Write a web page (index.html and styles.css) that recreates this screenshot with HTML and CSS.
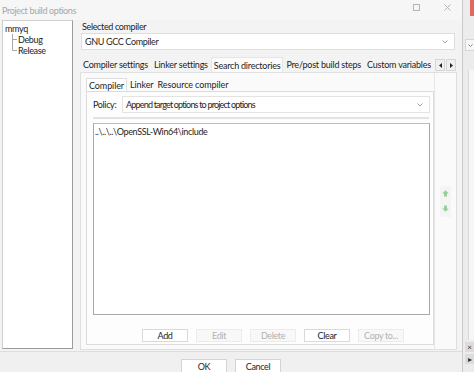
FILE: index.html
```html
<!DOCTYPE html>
<html lang="en">
<head>
<meta charset="UTF-8">
<title>Project build options</title>
<link rel="stylesheet" href="styles.css">
</head>
<body>
<div class="screen">
    <div class="dialog">
        <div class="titlebar">
            <span class="title">Project build options</span>
            <span class="win-btns">
                <svg width="7" height="7" viewBox="0 0 7 7"><rect x="0.5" y="0.5" width="6" height="6" fill="none" stroke="#b5b5b5"/></svg>
                <svg width="7" height="7" viewBox="0 0 7 7"><path d="M0.5 0.5L6.5 6.5M6.5 0.5L0.5 6.5" stroke="#b5b5b5"/></svg>
            </span>
        </div>
        <div class="body">
            <div class="tree">
                <div class="node">mmyq</div>
                <div class="kids">
                    <svg class="lines" width="6" height="22" viewBox="0 0 6 22"><path d="M1.5 0V16.5H6M1.5 5.5H6" fill="none" stroke="#a8a8a8"/></svg>
                    <div>
                        <div class="node">Debug</div>
                        <div class="node">Release</div>
                    </div>
                </div>
            </div>
            <div class="main">
                <div class="label">Selected compiler</div>
                <div class="select wide">
                    <span>GNU GCC Compiler</span>
                    <svg width="6" height="4" viewBox="0 0 6 4"><path d="M0.5 0.5L3 3L5.5 0.5" fill="none" stroke="#a0a0a0"/></svg>
                </div>
                <div class="tabs">
                    <span class="tab">Compiler settings</span>
                    <span class="tab">Linker settings</span>
                    <span class="tab active">Search directories</span>
                    <span class="tab">Pre/post build steps</span>
                    <span class="tab">Custom variables</span>
                    <span class="scroll">
                        <span class="arr"><svg width="3" height="5" viewBox="0 0 3 5"><path d="M3 0V5L0 2.5Z" fill="#222"/></svg></span>
                        <span class="arr"><svg width="3" height="5" viewBox="0 0 3 5"><path d="M0 0V5L3 2.5Z" fill="#222"/></svg></span>
                    </span>
                </div>
                <div class="panel">
                    <div class="subwrap">
                        <div class="subtabs">
                            <span class="subtab active">Compiler</span>
                            <span class="subtab">Linker</span>
                            <span class="subtab">Resource compiler</span>
                        </div>
                        <div class="subpanel">
                            <div class="policy">
                                <span class="policy-label">Policy:</span>
                                <div class="select narrow">
                                    <span class="tight">Append target options to project options</span>
                                    <svg width="6" height="4" viewBox="0 0 6 4"><path d="M0.5 0.5L3 3L5.5 0.5" fill="none" stroke="#a0a0a0"/></svg>
                                </div>
                            </div>
                            <div class="sep"></div>
                            <div class="list">..\..\..\OpenSSL-Win64\include</div>
                            <div class="buttons">
                                <span class="btn">Add</span>
                                <span class="btn off">Edit</span>
                                <span class="btn off">Delete</span>
                                <span class="btn">Clear</span>
                                <span class="btn off">Copy to...</span>
                            </div>
                        </div>
                    </div>
                    <div class="side">
                        <div class="movers">
                            <svg width="7" height="7" viewBox="0 0 7 7"><path d="M3.5 0.3L6.7 3.4H4.9V6.6H2.1V3.4H0.3Z" fill="#93cf93"/></svg>
                            <svg width="7" height="7" viewBox="0 0 7 7"><path d="M3.5 6.7L6.7 3.6H4.9V0.4H2.1V3.6H0.3Z" fill="#93cf93"/></svg>
                        </div>
                    </div>
                </div>
            </div>
        </div>
        <div class="footer">
            <span class="btn big">OK</span>
            <span class="btn big">Cancel</span>
        </div>
    </div>
    <div class="behind">
        <div class="red"></div>
        <div class="mini-drop"><svg width="5" height="3" viewBox="0 0 5 3"><path d="M0.5 0.5L2.5 2.5L4.5 0.5" fill="none" stroke="#888"/></svg></div>
        <div class="behind-panel"></div>
        <div class="mini-btn">×</div>
        <div class="mini-btn">▸</div>
    </div>
</div>
</body>
</html>
```
FILE: styles.css
```css
* {
    box-sizing: border-box;
}
body {
    margin: 0;
    width: 474px;
    height: 372px;
    overflow: hidden;
    font: 9px/1 "Lato", "Noto Sans", sans-serif;
    letter-spacing: -0.35px;
    white-space: nowrap;
    color: #1e1e1e;
    background: #e8e8e8;
}
.screen {
    display: flex;
    height: 372px;
}
.dialog {
    width: 463px;
    flex: none;
    display: flex;
    flex-direction: column;
    background: #f3f3f3;
    border-right: 1px solid #c9c9c9;
}
.titlebar {
    height: 20px;
    flex: none;
    display: flex;
    align-items: center;
    padding-left: 2px;
    color: #a6a6a6;
    background: #f6f6f6;
}
.title {
    flex: 1;
}
.win-btns {
    display: flex;
    gap: 24px;
    padding-right: 11px;
    margin-top: -6px;
}
.body {
    display: flex;
    height: 331px;
    flex: none;
    padding-left: 2px;
}
.tree {
    width: 71px;
    height: 329px;
    background: #fff;
    border: 1px solid #cfcfcf;
    border-right-color: #9c9c9c;
    border-bottom-color: #9c9c9c;
    padding: 2px 0 0 2px;
}
.node {
    line-height: 11px;
}
.kids {
    display: flex;
    padding-left: 6px;
}
.lines {
    margin-right: 1px;
}
.main {
    margin-left: 7px;
    width: 377px;
    display: flex;
    flex-direction: column;
}
.label {
    height: 13px;
    line-height: 13px;
    padding-left: 2px;
}
.select {
    height: 17px;
    display: flex;
    align-items: center;
    justify-content: space-between;
    background: #fff;
    border: 1px solid #dedede;
    padding: 0 6px 0 3px;
}
.select.wide {
    width: 374px;
    margin-left: 1px;
}
.tabs {
    margin-top: 7px;
    height: 15px;
    display: flex;
    align-items: stretch;
}
.tab {
    flex: none;
    padding: 0 3px;
    letter-spacing: -0.22px;
    display: flex;
    align-items: center;
}
.tab.active {
    padding: 0 2px;
    background: #fbfbfb;
    border: 1px solid #e6e6e6;
    border-bottom: none;
}
.scroll {
    margin-left: auto;
    display: flex;
    gap: 1px;
    padding-top: 2px;
    padding-right: 1px;
}
.arr {
    width: 10px;
    height: 12px;
    display: flex;
    align-items: center;
    justify-content: center;
    background: #f0f0f0;
    border: 1px solid #d6d6d6;
}
.panel {
    height: 278px;
    display: flex;
    background: #fafafa;
    border: 1px solid #dfdfdf;
}
.subwrap {
    width: 348px;
    margin-left: 5px;
    padding-top: 5px;
    display: flex;
    flex-direction: column;
}
.subtabs {
    height: 13px;
    display: flex;
}
.subtab {
    padding: 0 2px;
    letter-spacing: -0.1px;
    display: flex;
    align-items: center;
}
.subtab.active {
    margin-right: 1px;
    background: #fff;
    border: 1px solid #dedede;
    border-bottom: none;
}
.subpanel {
    height: 254px;
    background: #fdfdfd;
    border: 1px solid #dcdcdc;
    padding: 4px 3px 0 6px;
}
.policy {
    display: flex;
    align-items: center;
    height: 17px;
}
.policy-label {
    width: 29px;
}
.select.narrow {
    flex: 1;
    border-color: #e3e3e3;
}
.tight {
    letter-spacing: -0.8px;
}
.sep {
    margin-top: 4px;
    height: 2px;
    background: #e3e3e3;
    width: 336px;
}
.list {
    margin-top: 4px;
    width: 337px;
    height: 192px;
    background: #fff;
    border: 1px solid #a9a9a9;
    border-top-color: #bdbdbd;
    padding: 3px 1px;
}
.buttons {
    margin-top: 14px;
    display: flex;
    gap: 8px;
    padding-left: 49px;
}
.btn {
    width: 46px;
    height: 13px;
    display: flex;
    align-items: center;
    justify-content: center;
    background: #fff;
    border: 1px solid #d9d9d9;
}
.btn.off {
    color: #b2b2b2;
    background: #f8f8f8;
    border-color: #ececec;
}
.side {
    flex: 1;
    display: flex;
    justify-content: center;
    padding-top: 113px;
    border-left: 1px solid #e6e6e6;
}
.movers {
    width: 11px;
    height: 31px;
    display: flex;
    flex-direction: column;
    align-items: center;
    gap: 8px;
    padding-top: 4px;
    background: #f4f4f4;
}
.footer {
    flex: 1;
    display: flex;
    gap: 8px;
    padding: 7px 0 0 181px;
    border-top: 1px solid #dddddd;
    background: #f0f0f0;
}
.btn.big {
    height: 20px;
    align-items: flex-start;
    padding-top: 2px;
    width: 46px;
    border-color: #d4d4d4;
}
.behind {
    flex: 1;
    display: flex;
    flex-direction: column;
    align-items: flex-end;
    background: #ececec;
}
.red {
    width: 4px;
    height: 16px;
    background: #dc6a5e;
}
.mini-drop {
    margin-top: 23px;
    width: 9px;
    height: 12px;
    background: #f7f7f7;
    border: 1px solid #d5d5d5;
    border-right: none;
    display: flex;
    align-items: center;
    justify-content: center;
}
.behind-panel {
    margin-top: 19px;
    width: 6px;
    height: 270px;
    background: #f6f6f6;
    border-left: 1px solid #d8d8d8;
}
.mini-btn {
    width: 9px;
    height: 10px;
    margin-top: 2px;
    font-size: 8px;
    line-height: 10px;
    text-align: center;
    color: #333;
    background: #dcdcdc;
}
```
